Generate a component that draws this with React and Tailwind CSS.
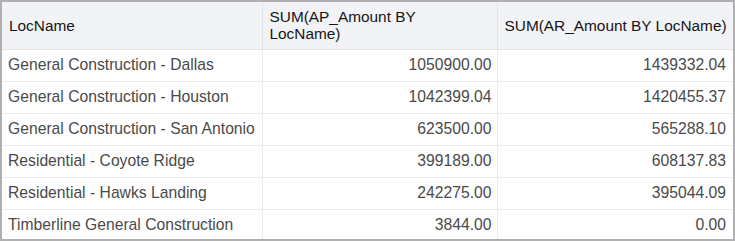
import React from "react";

const rows = [
  ["General Construction - Dallas", "1050900.00", "1439332.04"],
  ["General Construction - Houston", "1042399.04", "1420455.37"],
  ["General Construction - San Antonio", "623500.00", "565288.10"],
  ["Residential - Coyote Ridge", "399189.00", "608137.83"],
  ["Residential - Hawks Landing", "242275.00", "395044.09"],
  ["Timberline General Construction", "3844.00", "0.00"],
];

export default function App() {
  return (
    <div className="w-[735px] h-[241px] bg-white border-2 border-[#b0b0b0] overflow-hidden" style={{ fontFamily: '"Liberation Sans", Arial, sans-serif' }}>
      <table className="w-full border-collapse table-fixed text-[15.7px]">
        <colgroup>
          <col className="w-[260px]" />
          <col className="w-[235px]" />
          <col />
        </colgroup>
        <thead>
          <tr className="bg-[#f1f3f6] h-[47px] text-[15.4px]">
            <th className="text-left font-normal text-[#161616] px-[7px] leading-[17px] align-middle border-b border-[#e3e5e8]">LocName</th>
            <th className="text-left font-normal text-[#161616] px-[7px] leading-[17px] align-middle border-b border-l border-[#e3e5e8]">SUM(AP_Amount BY<br />LocName)</th>
            <th className="text-left font-normal text-[#161616] pl-[7px] pr-[4px] leading-[17px] align-middle border-b border-l border-[#e3e5e8] whitespace-nowrap">SUM(AR_Amount BY LocName)</th>
          </tr>
        </thead>
        <tbody>
          {rows.map((r, i) => (
            <tr key={i} className="h-[32px]">
              <td className="text-left text-[#4a4a4a] px-[6px] border-b border-[#ebedf0] whitespace-nowrap">{r[0]}</td>
              <td className="text-right text-[#4a4a4a] pl-[7px] pr-[5px] border-b border-l border-[#ebedf0]">{r[1]}</td>
              <td className="text-right text-[#4a4a4a] px-[7px] border-b border-l border-[#ebedf0]">{r[2]}</td>
            </tr>
          ))}
        </tbody>
      </table>
    </div>
  );
}
